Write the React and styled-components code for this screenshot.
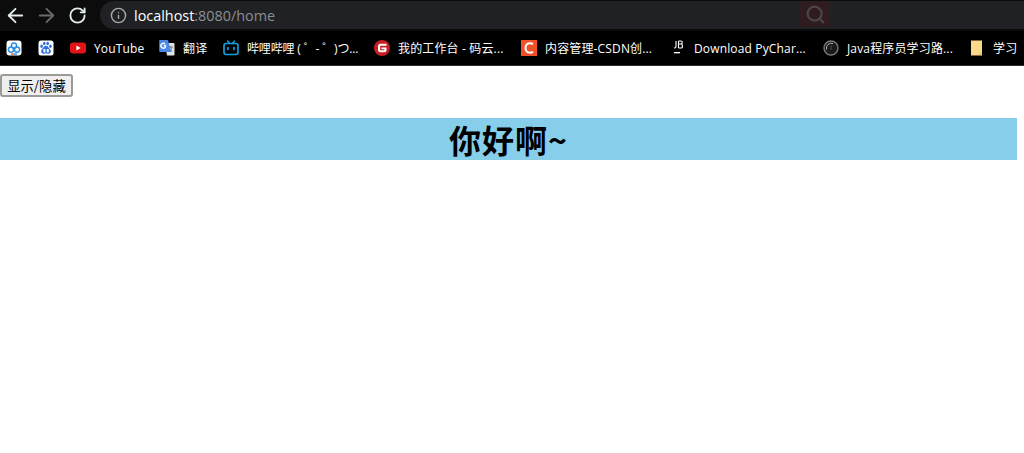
import React, { useState } from 'react';
import styled, { createGlobalStyle } from 'styled-components';
import { ArrowLeft, ArrowRight, RotateCw, Info, Search } from 'lucide-react';

const GlobalStyle = createGlobalStyle`
  html, body {
    margin: 0;
    padding: 0;
    background: #fff;
    overflow: hidden;
  }
  body {
    font-family: "Liberation Sans", "Noto Sans CJK SC", sans-serif;
  }
`;

const Toolbar = styled.div`
  height: 31px;
  background: #0c0c0d;
  display: flex;
  align-items: flex-start;
  padding-top: 1px;
  box-sizing: border-box;
`;

const NavButton = styled.div`
  width: 31px;
  height: 28px;
  flex: none;
  display: flex;
  align-items: center;
  justify-content: center;
  color: ${(p) => (p.$disabled ? '#686b68' : '#e4eee6')};
`;

const AddressBar = styled.div`
  position: relative;
  flex: 1;
  height: 28px;
  margin-left: 7px;
  background: #202124;
  border-radius: 14px 0 0 14px;
  display: flex;
  align-items: center;
  padding-left: 10px;
  font-family: "Open Sans", "Noto Sans", sans-serif;
  font-size: 14.4px;
  color: #fff;
`;

const InfoIcon = styled.span`
  display: flex;
  color: #a6aaa8;
  margin-right: 7px;
`;

const Muted = styled.span`
  color: #8b8e92;
`;

const SearchExt = styled.div`
  position: absolute;
  left: 700px;
  top: 0;
  width: 30px;
  height: 26px;
  background: #2f1c1f;
  color: #4a4547;
  display: flex;
  align-items: center;
  justify-content: center;
`;

const BookmarkBar = styled.div`
  height: 35px;
  box-sizing: border-box;
  background: #000;
  border-bottom: 1px solid #2b2b2d;
  display: flex;
  align-items: center;
  padding-left: 6px;
  gap: 16px;
  white-space: nowrap;
  overflow: hidden;
`;

const Bookmark = styled.div`
  display: flex;
  align-items: center;
  gap: 8px;
  flex: none;
  color: #fff;
  font-family: "Open Sans", "Noto Sans", "Noto Sans CJK SC", sans-serif;
  font-size: 12px;
`;

const BookmarkLabel = styled.span`
  display: block;
  width: ${(p) => p.$w}px;
  white-space: nowrap;
  letter-spacing: ${(p) => (p.$tight ? '-0.15px' : '0.15px')};
`;

const Fav = styled.svg`
  width: 16px;
  height: 16px;
  flex: none;
  display: block;
`;

const Page = styled.main`
  padding-top: 8px;
`;

const ToggleButton = styled.button`
  display: block;
  margin: 0;
  height: 23px;
  width: 73px;
  padding: 0;
  font-family: "Noto Sans CJK SC", sans-serif;
  font-size: 13.33px;
  line-height: 1;
  color: #000;
  background: #efefef;
  border: 2px solid #999b94;
  border-radius: 3px;
`;

const Title = styled.h1`
  margin: 21px 7px 0 0;
  height: 42px;
  line-height: 43px;
  background: #87ceeb;
  text-align: center;
  font-family: "Noto Sans CJK SC", sans-serif;
  font-size: 32px;
  font-weight: 700;
  letter-spacing: 1px;
  color: #000;
`;

const Cloud = () => (
  <Fav viewBox="0 0 16 16">
    <rect x="0.5" y="0.5" width="15" height="15" rx="3" fill="#fff" />
    <circle cx="8" cy="5.600" r="2.600" fill="none" stroke="#2b8fe8" strokeWidth="1.500" />
    <circle cx="5" cy="9.600" r="2.600" fill="none" stroke="#2b8fe8" strokeWidth="1.500" />
    <circle cx="11" cy="9.600" r="2.600" fill="none" stroke="#2b8fe8" strokeWidth="1.500" />
    <path d="M5 14h3" stroke="#ee5a4a" strokeWidth="1.400" />
    <path d="M8 14h3" stroke="#2b8fe8" strokeWidth="1.400" />
  </Fav>
);

const Baidu = () => (
  <Fav viewBox="0 0 16 16">
    <rect x="0.5" y="0.5" width="15" height="15" rx="2.500" fill="#fff" />
    <ellipse cx="3.600" cy="6.200" rx="1.300" ry="1.700" fill="#2f6fdf" />
    <ellipse cx="6.300" cy="3.500" rx="1.300" ry="1.700" fill="#2f6fdf" />
    <ellipse cx="9.700" cy="3.500" rx="1.300" ry="1.700" fill="#2f6fdf" />
    <ellipse cx="12.400" cy="6.200" rx="1.300" ry="1.700" fill="#2f6fdf" />
    <path d="M8 5.800c2 0 2.400 2 4 3.400 1.600 1.600.8 4.800-2 4.600-1.200 0-1.400-.5-2-.5s-.8.5-2 .5c-2.800.2-3.600-3-2-4.600 1.600-1.400 2-3.400 4-3.400z" fill="#2f6fdf" />
    <rect x="5.400" y="9" width="2" height="3.400" fill="#fff" />
    <rect x="8.800" y="9" width="2" height="3.400" fill="#fff" />
  </Fav>
);

const YouTube = () => (
  <Fav viewBox="0 0 16 16">
    <rect x="0" y="2.500" width="16" height="11" rx="3" fill="#e01414" />
    <path d="M6.400 5.600v4.800L10.600 8z" fill="#fff" />
  </Fav>
);

const Translate = () => (
  <Fav viewBox="0 0 16 16">
    <path d="M6 3h8.500a1 1 0 0 1 1 1v10.500a1 1 0 0 1-1 1H8z" fill="#dfe5de" />
    <path d="M9.400 7h4.200M11.500 6v1M10 11.500c1.600-1 2.600-2.600 3-4.500M10.200 8.600c.6 1.200 1.700 2.200 3 2.800" stroke="#5d6f66" strokeWidth="0.900" fill="none" />
    <path d="M1.200 0h7a1 1 0 0 1 1 .8l3 11.200H1.200a1 1 0 0 1-1-1V1.200a1 1 0 0 1 1-1.200z" fill="#4a86e8" />
    <path d="M7 5.100H4.800v1.300h1.100c-.2.800-.8 1.200-1.500 1.200a1.800 1.800 0 0 1 0-3.600c.5 0 .9.200 1.200.5l1-1a3.200 3.200 0 1 0-2.200 5.500c1.900 0 3-1.300 2.800-3.900z" fill="#fff" />
  </Fav>
);

const Bilibili = () => (
  <Fav viewBox="0 0 16 16">
    <path d="M4.500 1l2.300 2.500M11.500 1L9.200 3.500" stroke="#0ea0dc" strokeWidth="1.500" strokeLinecap="round" />
    <rect x="1" y="3.500" width="14" height="11" rx="2.200" fill="none" stroke="#0ea0dc" strokeWidth="1.700" />
    <path d="M5 7.500v2M11 7.500v2" stroke="#0ea0dc" strokeWidth="1.700" strokeLinecap="round" />
  </Fav>
);

const Gitee = () => (
  <Fav viewBox="0 0 16 16">
    <circle cx="8" cy="8" r="8" fill="#c71d23" />
    <path d="M12.500 3.800H6.500a2.500 2.500 0 0 0-2.500 2.500v3.400a2.500 2.500 0 0 0 2.500 2.500H10a2.500 2.500 0 0 0 2.500-2.500V7.400H7.300v1.900h3.100v.5c0 .2-.2.400-.4.400H6.600a.5.500 0 0 1-.5-.5V6.300c0-.3.200-.5.500-.5h5.900z" fill="#fff" />
  </Fav>
);

const Csdn = () => (
  <Fav viewBox="0 0 16 16">
    <rect width="16" height="16" fill="#f0502a" />
    <path d="M12 4.200A4.700 4.700 0 0 0 9.300 3.300c-3 0-4.800 2-4.800 4.700s1.800 4.700 4.800 4.700c1 0 2-.3 2.700-.9" fill="none" stroke="#fff" strokeWidth="2" />
  </Fav>
);

const JetBrains = () => (
  <Fav viewBox="0 0 16 16">
    <rect width="16" height="16" fill="#000" />
    <path d="M6 1v5.500c0 1-.6 1.500-1.500 1.500H4M8.500 1v7M8.500 1h2.300c1 0 1.500.5 1.500 1.500 0 .9-.5 1.500-1.500 1.500H8.500M10.800 4c1.200 0 1.700.6 1.700 1.900 0 1.300-.6 2.100-1.700 2.100H8.500" fill="none" stroke="#fff" strokeWidth="1.100" />
    <rect x="4" y="12" width="6" height="1.300" fill="#fff" />
  </Fav>
);

const Dark = () => (
  <Fav viewBox="0 0 16 16">
    <circle cx="8" cy="8" r="7" fill="#1b1b1b" stroke="#77797a" strokeWidth="1.400" />
    <path d="M3.500 9.500A5 5 0 0 1 10 3.500" fill="none" stroke="#b5b6b6" strokeWidth="1" />
    <path d="M8.500 5.500l-1 3.500 1.500 0" fill="none" stroke="#555" strokeWidth="0.800" />
  </Fav>
);

const Folder = () => (
  <Fav viewBox="0 0 16 16">
    <path d="M2 .5h11v15H2z" fill="#fcd98a" />
    <path d="M11 15.500v-2.500h2" fill="none" stroke="#d3ad5d" strokeWidth="0.800" />
  </Fav>
);

const bookmarks = [
  { icon: Cloud },
  { icon: Baidu },
  { icon: YouTube, label: 'YouTube', w: 49 },
  { icon: Translate, label: '翻译', w: 24 },
  { icon: Bilibili, label: '哔哩哔哩 ( ゜- ゜)つ...', w: 111, tight: true },
  { icon: Gitee, label: '我的工作台 - 码云...', w: 107 },
  { icon: Csdn, label: '内容管理-CSDN创...', w: 109 },
  { icon: JetBrains, label: 'Download PyChar...', w: 113 },
  { icon: Dark, label: 'Java程序员学习路...', w: 106 },
  { icon: Folder, label: '学习', w: 24 },
];

export default function App() {
  const [visible, setVisible] = useState(true);

  return (
    <>
      <GlobalStyle />
      <Toolbar>
        <NavButton><ArrowLeft size={23} strokeWidth={1.9} /></NavButton>
        <NavButton $disabled><ArrowRight size={23} strokeWidth={1.9} /></NavButton>
        <NavButton><RotateCw size={19} strokeWidth={2.3} /></NavButton>
        <AddressBar>
          <InfoIcon><Info size={17} strokeWidth={2} /></InfoIcon>
          <span>localhost<Muted>:8080/home</Muted></span>
          <SearchExt><Search size={21} strokeWidth={2.5} /></SearchExt>
        </AddressBar>
      </Toolbar>
      <BookmarkBar>
        {bookmarks.map((b, i) => (
          <Bookmark key={i}>
            <b.icon />
            {b.label && <BookmarkLabel $w={b.w} $tight={b.tight}>{b.label}</BookmarkLabel>}
          </Bookmark>
        ))}
      </BookmarkBar>
      <Page>
        <ToggleButton onClick={() => setVisible(!visible)}>显示/隐藏</ToggleButton>
        {visible && <Title>你好啊~</Title>}
      </Page>
    </>
  );
}
